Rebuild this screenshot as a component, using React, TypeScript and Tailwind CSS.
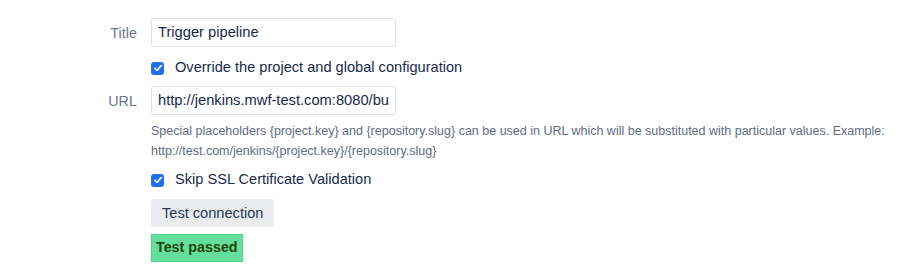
import React from "react";

const font = { fontFamily: '"Liberation Sans", Arial, sans-serif' };

const Check = ({ label }: { label: string }) => (
    <label className="flex items-center gap-[11px] text-[14.6px] text-[#172b4d] h-[24px]">
        <span className="w-[13px] h-[13px] rounded-[3px] bg-[#1f6ff2] flex items-center justify-center">
            <svg viewBox="0 0 12 12" className="w-[10px] h-[10px]">
                <path d="M2.2 6.2 L4.8 8.8 L9.8 3.2" stroke="#fff" strokeWidth="2" fill="none" strokeLinecap="round" strokeLinejoin="round" />
            </svg>
        </span>
        {label}
    </label>
);

const Field = ({ label, value }: { label: string; value: string }) => (
    <div className="flex items-center">
        <div className="w-[137px] text-right text-[14.4px] text-[#6b778c] pt-[2px]">{label}</div>
        <div className="ml-[14px] w-[245px] h-[29px] border border-[#dfe1e6] rounded-[3px] bg-white flex items-center px-[6px] text-[14.7px] text-[#172b4d] overflow-hidden whitespace-nowrap">
            {value}
        </div>
    </div>
);

export default function App() {
    return (
        <div className="w-[900px] h-[269px] bg-white pt-[18px]" style={font}>
            <Field label="Title" value="Trigger pipeline" />
            <div className="ml-[151px] mt-[9px]">
                <Check label="Override the project and global configuration" />
            </div>
            <div className="mt-[6px]">
                <Field label="URL" value="http://jenkins.mwf-test.com:8080/bu" />
            </div>
            <div className="ml-[151px] mt-[6px] text-[12.5px] leading-[20px] text-[#5e6c84] pr-[6px]">
                Special placeholders {"{project.key}"} and {"{repository.slug}"} can be used in URL which will be substituted with particular values. Example: http://test.com/jenkins/{"{project.key}"}/{"{repository.slug}"}
            </div>
            <div className="ml-[151px] mt-[7px]">
                <Check label="Skip SSL Certificate Validation" />
            </div>
            <div className="ml-[151px] mt-[7px] flex flex-col items-start gap-[7px]">
                <button className="h-[28px] px-[11px] pt-[1px] rounded-[3px] bg-[#ebecf0] text-[14.6px] text-[#253858]">
                    Test connection
                </button>
                <div className="h-[28px] px-[4px] flex items-center bg-[#63de9c] border border-[#57d18f] text-[14.3px] font-bold text-[#22450f]">
                    Test passed
                </div>
            </div>
        </div>
    );
}
